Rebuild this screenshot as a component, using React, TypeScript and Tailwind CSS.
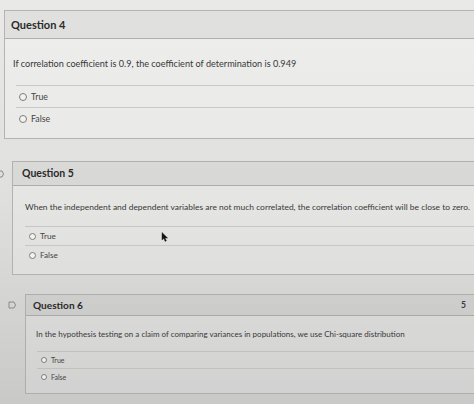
import React from "react";

function Flag({ cls }: { cls: string }) {
  return (
    <svg className={cls} width="10" height="8" viewBox="0 0 10 8" fill="none">
      <path d="M1 1 H6 Q9 4 6 7 H1 Z" stroke="#8a8a8a" strokeWidth="1" strokeLinejoin="round" />
    </svg>
  );
}

function Radio({ size }: { size: number }) {
  return (
    <span
      className="inline-block shrink-0 rounded-full border border-[#7d7d7d] bg-[#f2f2f0]"
      style={{ width: size, height: size }}
    />
  );
}

export default function App() {
  return (
    <div
      className="relative w-[474px] h-[404px] overflow-hidden bg-gradient-to-b from-[#e9e9e7] via-[#dfdfdd] to-[#c9c9c8] flex flex-col pt-[10px]"
      style={{ fontFamily: "Lato, 'Open Sans', sans-serif" }}
    >
      {/* Question 4 */}
      <div className="flex ml-[4px]">
        <div className="w-[500px] shrink-0 border border-[#b4b4b2] bg-white/25">
          <div className="h-[28px] flex items-center pl-[6px] bg-black/[0.06] border-b border-[#b0b0ae]">
            <span className="text-[11px] font-bold text-[#2a2a2a] leading-none">Question 4</span>
          </div>
          <div className="pt-[19px] pl-[8px]">
            <p className="h-[12px] leading-[12px] text-[9.1px] text-[#383838] whitespace-nowrap">
              If correlation coefficient is 0.9, the coefficient of determination is 0.949
            </p>
          </div>
          <div className="mt-[15px] ml-[11px] pb-[9px]">
            <div className="h-[22px] flex items-center gap-[4px] pl-[3px] border-t border-[#c9c9c7]">
              <Radio size={8} />
              <span className="text-[8.8px] text-[#454545]">True</span>
            </div>
            <div className="h-[22px] flex items-center gap-[4px] pl-[3px] border-t border-[#c9c9c7]">
              <Radio size={8} />
              <span className="text-[8.8px] text-[#454545]">False</span>
            </div>
          </div>
        </div>
      </div>

      {/* Question 5 */}
      <div className="flex items-start mt-[22px]">
        <Flag cls="ml-[-4px] mr-[6px] mt-[9px] shrink-0" />
        <div className="w-[490px] shrink-0 border border-[#b2b2b0] bg-white/20">
          <div className="h-[24px] flex items-center pl-[9px] bg-black/[0.06] border-b border-[#adadab]">
            <span className="text-[10.5px] font-bold text-[#2a2a2a] leading-none">Question 5</span>
          </div>
          <div className="pt-[16px] pl-[12px]">
            <p className="h-[11px] leading-[11px] text-[8.45px] text-[#383838] whitespace-nowrap">
              When the independent and dependent variables are not much correlated, the correlation coefficient will be close to zero.
            </p>
          </div>
          <div className="mt-[13px] ml-[12px] pb-[10px]">
            <div className="h-[19px] flex items-center gap-[4px] pl-[4px] border-t border-[#c6c6c4]">
              <Radio size={7} />
              <span className="text-[8.2px] text-[#454545]">True</span>
            </div>
            <div className="h-[19px] flex items-center gap-[4px] pl-[4px] border-t border-[#c6c6c4]">
              <Radio size={7} />
              <span className="text-[8.2px] text-[#454545]">False</span>
            </div>
          </div>
        </div>
      </div>

      {/* Question 6 */}
      <div className="flex items-start mt-[19px]">
        <Flag cls="ml-[8px] mr-[7px] mt-[7px] shrink-0" />
        <div className="w-[479px] shrink-0 border border-[#aeaeac] bg-white/15">
          <div className="h-[21px] flex items-center justify-between pl-[7px] pr-[37px] bg-black/[0.06] border-b border-[#a9a9a7]">
            <span className="text-[10.1px] font-bold text-[#2a2a2a] leading-none">Question 6</span>
            <span className="text-[8.5px] font-bold text-[#3a3a3a] leading-none">5</span>
          </div>
          <div className="pt-[13px] pl-[10px]">
            <p className="h-[10px] leading-[10px] text-[8px] text-[#383838] whitespace-nowrap">
              In the hypothesis testing on a claim of comparing variances in populations, we use Chi-square distribution
            </p>
          </div>
          <div className="mt-[12px] ml-[11px] pb-[8px]">
            <div className="h-[17px] flex items-center gap-[4px] pl-[4px] border-t border-[#c0c0be]">
              <Radio size={6} />
              <span className="text-[7px] text-[#454545]">True</span>
            </div>
            <div className="h-[17px] flex items-center gap-[4px] pl-[4px] border-t border-[#c0c0be]">
              <Radio size={6} />
              <span className="text-[7px] text-[#454545]">False</span>
            </div>
          </div>
        </div>
      </div>

      {/* mouse cursor overlay */}
      <svg className="absolute left-[161px] top-[232px]" width="8" height="10" viewBox="0 0 8 10">
        <path d="M1 0.5 L1 8 L2.8 6.4 L4.2 9.4 L5.4 8.8 L4 6 L6.6 6 Z" fill="#111" stroke="#333" strokeWidth="0.5" />
      </svg>
    </div>
  );
}
